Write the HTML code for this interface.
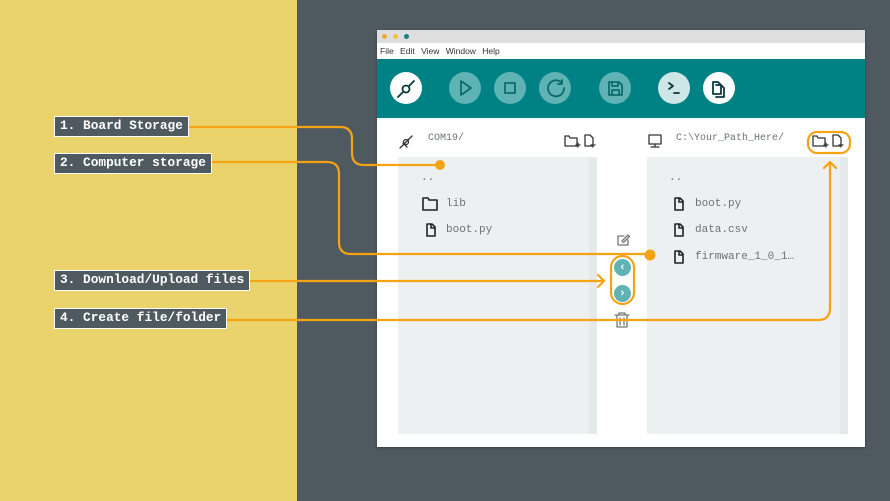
<!DOCTYPE html>
<html><head><style>
*{margin:0;padding:0;box-sizing:border-box}
body{width:890px;height:501px;overflow:hidden;position:relative;background:#4e5a60;font-family:"Liberation Sans",sans-serif}
.a{position:absolute}
.lbl{position:absolute;background:#4e5a60;border:1.5px solid #fff;color:#fff;font:bold 12.8px "Liberation Mono",monospace;padding:0 5px;height:21px;line-height:18px}
.mono{font:11px "Liberation Mono",monospace;color:#6d7275;position:absolute}
.btn{position:absolute;width:32px;height:32px;border-radius:50%;background:#5fb3b5;top:72px}
</style></head><body>
<div class="a" style="left:0;top:0;width:297px;height:501px;background:#ebd36b"></div>
<div class="a" style="left:377px;top:30px;width:488px;height:417px;background:#fff;box-shadow:0 1px 3px rgba(0,0,0,.3)"></div>
<div class="a" style="left:377px;top:30px;width:488px;height:13px;background:#dedede"></div>
<div class="a" style="left:382px;top:34px;width:5px;height:5px;border-radius:50%;background:#f2a93b"></div>
<div class="a" style="left:393px;top:34px;width:5px;height:5px;border-radius:50%;background:#eec23c"></div>
<div class="a" style="left:404px;top:34px;width:5px;height:5px;border-radius:50%;background:#10858a"></div>
<div class="a" style="left:380px;top:46px;font-size:8.5px;color:#333;word-spacing:4px">File Edit View Window Help</div>
<div class="a" style="left:377px;top:59px;width:488px;height:59px;background:#008184"></div>
<div class="btn" style="left:390px;background:#fff"></div>
<div class="btn" style="left:449px"></div>
<div class="btn" style="left:494px"></div>
<div class="btn" style="left:539px"></div>
<div class="btn" style="left:599px"></div>
<div class="btn" style="left:658px;background:#cfe6e6"></div>
<div class="btn" style="left:703px;background:#fff"></div>
<div class="a" style="left:398px;top:157px;width:199px;height:277px;background:#edf0f1"></div>
<div class="a" style="left:589px;top:157px;width:8px;height:277px;background:#e6e9ea"></div>
<div class="a" style="left:647px;top:157px;width:201px;height:277px;background:#edf0f1"></div>
<div class="a" style="left:840px;top:157px;width:8px;height:277px;background:#e6e9ea"></div>
<svg class="a" style="left:0;top:0" width="890" height="501" fill="none" stroke-linecap="round" stroke-linejoin="round">
<g stroke="#0c3a3c" stroke-width="1.8">
<path d="M398 97l16-16M403 87l5 5"/><circle cx="406" cy="89" r="3.5" fill="#fff"/>
<path d="M461 81v14l10-7z" stroke="#0b6b6e"/>
<rect x="505" y="83" width="10" height="10" stroke="#0b6b6e"/>
<path d="M562 83a8 8 0 1 0 2 5M562 80v4h-4" stroke="#0b6b6e"/>
<path d="M609 82h10l3 3v10h-13zM612 82v4h6v-4M612 95v-5h7v5" stroke="#0b6b6e"/>
<path d="M669 83l4 3-4 3M674 93h5" stroke="#0c3a3c"/>
<path d="M713 82h5l3 3v9h-8zM716 85h5l3 3v9h-8" stroke="#0c3a3c"/>
</g>
<g stroke="#333" stroke-width="1.3">
<path d="M400 148l12-12M403 143l4 4"/><circle cx="406" cy="142" r="2.5"/>
<path d="M565 136h4l1 2h7v8h-12zM576 145h4M578 143v4"/>
<path d="M585 135h5l3 3v8h-8zM591 145h4M593 143v4"/>
<rect x="649" y="135" width="12" height="9"/><path d="M655 144v3M651 147h8"/>
<path d="M813 136h4l1 2h7v8h-12zM824 145h4M826 143v4"/>
<path d="M833 135h5l3 3v8h-8zM839 145h4M841 143v4"/>
</g>
<g stroke="#222" stroke-width="1.6">
<path d="M423 198h5l1 2h8v10h-14z"/>
<path d="M427 224h5l3 3v9h-8zM431 224v4h4"/>
<path d="M675 198h5l3 3v9h-8zM679 198v4h4"/>
<path d="M675 224h5l3 3v9h-8zM679 224v4h4"/>
<path d="M675 251h5l3 3v9h-8zM679 251v4h4"/>
</g>
<g stroke="#777" stroke-width="1.3">
<path d="M618 236h6M618 236v9h10v-5M622 241l6-6 1.5 1.5-6 6z"/>
<path d="M615 315h14M619 315v-2h6v2M617 315v12h10v-12M620 318v7M624 318v7"/>
</g>
</svg>
<div class="mono" style="left:428px;top:133px;font-size:10px">COM19/</div>
<div class="mono" style="left:676px;top:133px;font-size:10px">C:\Your_Path_Here/</div>
<div class="mono" style="left:421px;top:172px">..</div>
<div class="mono" style="left:446px;top:198px">lib</div>
<div class="mono" style="left:446px;top:224px">boot.py</div>
<div class="mono" style="left:669px;top:172px">..</div>
<div class="mono" style="left:695px;top:198px">boot.py</div>
<div class="mono" style="left:695px;top:224px">data.csv</div>
<div class="mono" style="left:695px;top:251px">firmware_1_0_1…</div>
<div class="a" style="left:614px;top:259px;width:17px;height:17px;border-radius:50%;background:#5fb3b5;color:#fff;font-size:11px;text-align:center;line-height:16px;font-weight:bold">‹</div>
<div class="a" style="left:614px;top:285px;width:17px;height:17px;border-radius:50%;background:#5fb3b5;color:#fff;font-size:11px;text-align:center;line-height:16px;font-weight:bold">›</div>
<svg class="a" style="left:0;top:0" width="890" height="501" fill="none" stroke="#f5a312" stroke-width="2.2" stroke-linecap="round" stroke-linejoin="round">
<path d="M190 127H340q12 0 12 12v14q0 12 12 12H440"/>
<circle cx="440" cy="165" r="5" fill="#f5a312" stroke="none"/>
<path d="M210 162H327q12 0 12 12v68q0 12 12 12H650"/>
<circle cx="650" cy="255" r="5.5" fill="#f5a312" stroke="none"/>
<path d="M249 281H604M598 275l6 6-6 6"/>
<path d="M226 320H818q12 0 12-12V162M824 168l6-6 6 6"/>
<rect x="611" y="256" width="23" height="48" rx="11.5"/>
<rect x="808" y="132" width="42" height="21" rx="9"/>
</svg>
<div class="lbl" style="left:54px;top:116px">1. Board Storage</div>
<div class="lbl" style="left:54px;top:153px">2. Computer storage</div>
<div class="lbl" style="left:54px;top:270px">3. Download/Upload files</div>
<div class="lbl" style="left:54px;top:308px">4. Create file/folder</div>
</body></html>
